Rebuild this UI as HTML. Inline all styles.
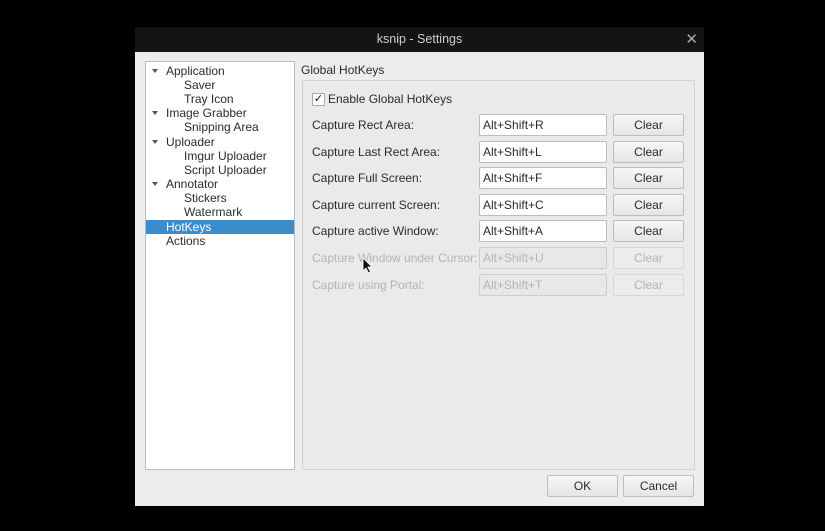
<!DOCTYPE html>
<html><head><style>
body{margin:0;width:825px;height:531px;background:#000;font-family:"Liberation Sans","DejaVu Sans",sans-serif;font-size:12px;color:#2b2b2b;position:relative;overflow:hidden}
.a{position:absolute}
#win{left:135px;top:27px;width:569px;height:479px;background:#ededed}
#title{left:135px;top:27px;width:569px;height:25px;background:#141414;color:#cfcfcf;text-align:center;line-height:25px;font-size:12.5px}
#tree{left:145px;top:61px;width:148px;height:407px;background:#fff;border:1px solid #bdbdbd}
.t{position:absolute;height:14px;line-height:14px;white-space:nowrap}
.tri{position:absolute;left:6px;width:0;height:0;border-left:3px solid transparent;border-right:3px solid transparent;border-top:4px solid #555;top:5px}
#grp{left:302px;top:80px;width:391px;height:388px;border:1px solid #d3d3d3;background:#eaeaea}
.lbl{position:absolute;left:312px;white-space:nowrap}
.in{position:absolute;left:479px;width:123px;height:20px;border:1px solid #bcbcbc;background:#fff;padding-left:3px;line-height:20px;border-radius:2px}
.btn{position:absolute;left:613px;width:69px;height:20px;border:1px solid #bdbdbd;background:linear-gradient(#f6f6f6,#e6e6e6);text-align:center;line-height:20px;border-radius:2px}
.dis{color:#b4b4b4}
.in.dis{background:#e8e8e8;border-color:#cdcdcd}
.btn.dis{background:#ececec;border-color:#d6d6d6}
</style></head><body>
<div class="a" id="win"></div>
<div class="a" id="title">ksnip - Settings<span style="position:absolute;right:6px;top:0;color:#aaa;font-size:15px">✕</span></div>
<div class="a" id="tree">
<div class="t" style="top:2px;left:0;width:148px"><span class="tri"></span><span style="position:absolute;left:20px">Application</span></div>
<div class="t" style="top:16px;left:38px">Saver</div>
<div class="t" style="top:30px;left:38px">Tray Icon</div>
<div class="t" style="top:44px;left:0;width:148px"><span class="tri"></span><span style="position:absolute;left:20px">Image Grabber</span></div>
<div class="t" style="top:58px;left:38px">Snipping Area</div>
<div class="t" style="top:73px;left:0;width:148px"><span class="tri"></span><span style="position:absolute;left:20px">Uploader</span></div>
<div class="t" style="top:87px;left:38px">Imgur Uploader</div>
<div class="t" style="top:101px;left:38px">Script Uploader</div>
<div class="t" style="top:115px;left:0;width:148px"><span class="tri"></span><span style="position:absolute;left:20px">Annotator</span></div>
<div class="t" style="top:129px;left:38px">Stickers</div>
<div class="t" style="top:143px;left:38px">Watermark</div>
<div class="t" style="top:158px;left:0;width:148px;background:#3a8ccc;color:#fff"><span style="position:absolute;left:20px">HotKeys</span></div>
<div class="t" style="top:172px;left:20px">Actions</div>
</div>
<div class="a" style="left:301px;top:63px">Global HotKeys</div>
<div class="a" id="grp"></div>
<div class="a" style="left:312px;top:93px;width:11px;height:11px;border:1px solid #aaa;background:#fff;font-size:11px;line-height:11px;text-align:center;color:#111">✓</div>
<div class="a" style="left:328px;top:92px">Enable Global HotKeys</div>
<div class="lbl" style="top:118px">Capture Rect Area:</div><div class="in" style="top:114px">Alt+Shift+R</div><div class="btn" style="top:114px">Clear</div>
<div class="lbl" style="top:145px">Capture Last Rect Area:</div><div class="in" style="top:141px">Alt+Shift+L</div><div class="btn" style="top:141px">Clear</div>
<div class="lbl" style="top:171px">Capture Full Screen:</div><div class="in" style="top:167px">Alt+Shift+F</div><div class="btn" style="top:167px">Clear</div>
<div class="lbl" style="top:198px">Capture current Screen:</div><div class="in" style="top:194px">Alt+Shift+C</div><div class="btn" style="top:194px">Clear</div>
<div class="lbl" style="top:224px">Capture active Window:</div><div class="in" style="top:220px">Alt+Shift+A</div><div class="btn" style="top:220px">Clear</div>
<div class="lbl dis" style="top:251px">Capture Window under Cursor:</div><div class="in dis" style="top:247px">Alt+Shift+U</div><div class="btn dis" style="top:247px">Clear</div>
<div class="lbl dis" style="top:278px">Capture using Portal:</div><div class="in dis" style="top:274px">Alt+Shift+T</div><div class="btn dis" style="top:274px">Clear</div>
<svg class="a" style="left:362px;top:257px" width="12" height="18" viewBox="0 0 12 18"><path d="M1 1 L1 14 L4 11 L6.5 16 L8.5 15 L6 10 L10 10 Z" fill="#111" stroke="#fff" stroke-width="0.8"/></svg>
<div class="btn" style="left:547px;top:475px;width:69px;height:20px">OK</div>
<div class="btn" style="left:623px;top:475px;width:69px;height:20px">Cancel</div>
</body></html>
